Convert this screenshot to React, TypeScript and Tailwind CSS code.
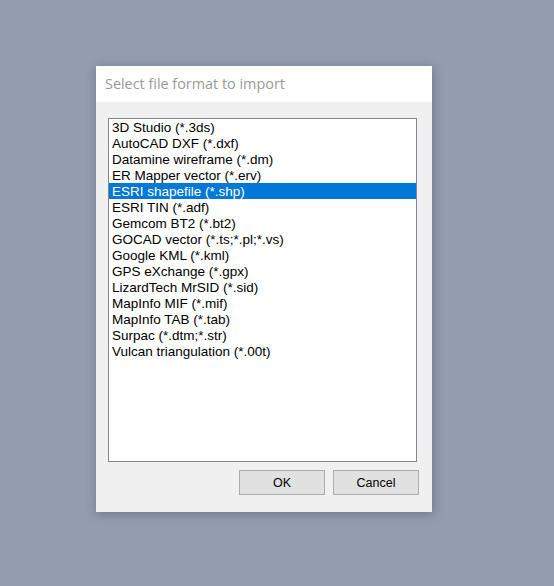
const formats = [
  "3D Studio (*.3ds)",
  "AutoCAD DXF (*.dxf)",
  "Datamine wireframe (*.dm)",
  "ER Mapper vector (*.erv)",
  "ESRI shapefile (*.shp)",
  "ESRI TIN (*.adf)",
  "Gemcom BT2 (*.bt2)",
  "GOCAD vector (*.ts;*.pl;*.vs)",
  "Google KML (*.kml)",
  "GPS eXchange (*.gpx)",
  "LizardTech MrSID (*.sid)",
  "MapInfo MIF (*.mif)",
  "MapInfo TAB (*.tab)",
  "Surpac (*.dtm;*.str)",
  "Vulcan triangulation (*.00t)",
];

const selected = 4;

export default function App() {
  return (
    <div className="h-[586px] w-[554px] bg-[#949cb0] pl-[96px] pt-[66px]">
      <div className="flex h-[446px] w-[336px] flex-col bg-[#f0f0f0] shadow-[1px_2px_10px_rgba(40,45,60,0.35)]">
        {/* title bar */}
        <div className="flex h-[36px] items-center bg-white pl-[9px] font-['Open_Sans',sans-serif] text-[14.4px] text-[#9a9a9a]">
          Select file format to import
        </div>

        <div className="flex flex-col pl-[12px] pr-[13px] pt-[16px]">
          <div className="h-[344px] w-[309px] border border-[#828790] bg-white font-['Liberation_Sans',Arial,sans-serif] text-[13.5px] leading-[16px]">
            {formats.map((f, i) => (
              <div
                key={f}
                className={
                  i === selected
                    ? "h-[16px] bg-[#0078d7] pl-[3px] pt-[1px] text-white"
                    : "h-[16px] pl-[3px] pt-[1px] text-black"
                }
              >
                {f}
              </div>
            ))}
          </div>

          <div className="mt-[8px] flex justify-end gap-[8px] font-['Liberation_Sans',Arial,sans-serif] text-[12.5px] text-black">
            <button className="h-[25px] w-[86px] border border-[#adadad] bg-[#e1e1e1] pt-[2px]">OK</button>
            <button className="h-[25px] w-[86px] border border-[#adadad] bg-[#e1e1e1] pt-[2px]">Cancel</button>
          </div>
        </div>
      </div>
    </div>
  );
}
